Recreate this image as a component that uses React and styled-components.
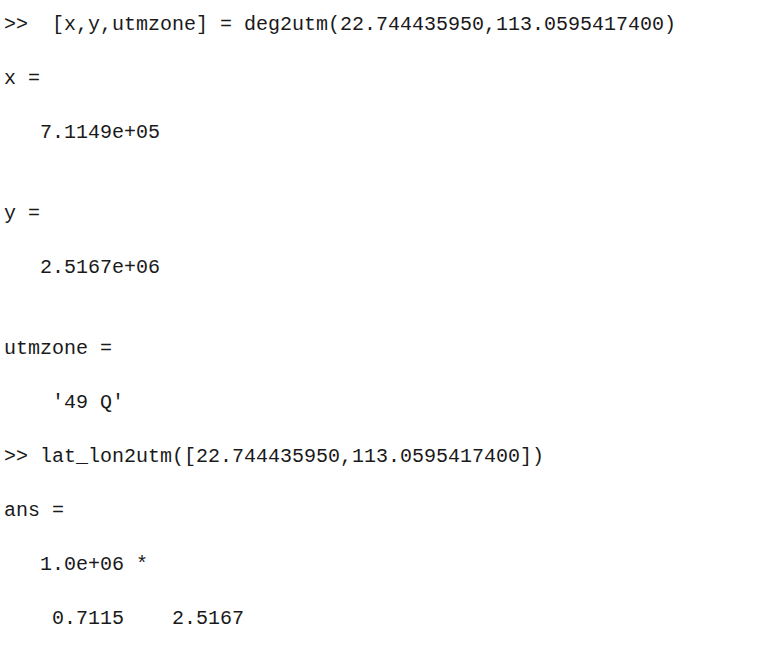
import React from 'react';
import styled, { createGlobalStyle } from 'styled-components';

const GlobalStyle = createGlobalStyle`
  html, body {
    margin: 0;
    padding: 0;
    background: #ffffff;
  }
`;

const CommandWindow = styled.div`
  width: 763px;
  height: 658px;
  box-sizing: border-box;
  padding: 11px 0 0 4px;
  background: #ffffff;
  color: #1a1a1a;
  font-family: "Courier New", "Liberation Mono", monospace;
  font-size: 20px;
  overflow: hidden;
`;

const Line = styled.div`
  height: 27px;
  line-height: 27px;
  white-space: pre;
`;

const lines = [
  '>>  [x,y,utmzone] = deg2utm(22.744435950,113.0595417400)',
  '',
  'x =',
  '',
  '   7.1149e+05',
  '',
  '',
  'y =',
  '',
  '   2.5167e+06',
  '',
  '',
  'utmzone =',
  '',
  "    '49 Q'",
  '',
  '>> lat_lon2utm([22.744435950,113.0595417400])',
  '',
  'ans =',
  '',
  '   1.0e+06 *',
  '',
  '    0.7115    2.5167',
];

export default function App() {
  return (
    <>
      <GlobalStyle />
      <CommandWindow>
        {lines.map((text, i) => (
          <Line key={i}>{text}</Line>
        ))}
      </CommandWindow>
    </>
  );
}
